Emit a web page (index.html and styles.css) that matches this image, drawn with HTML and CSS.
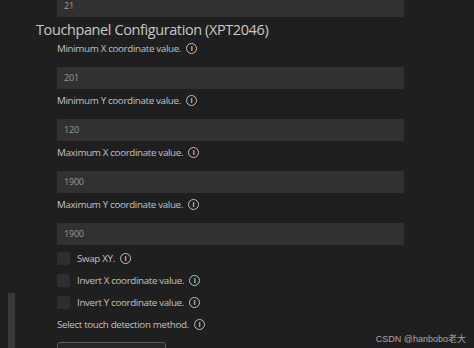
FILE: index.html
```html
<!DOCTYPE html>
<html>
<head>
<meta charset="utf-8">
<link rel="stylesheet" href="styles.css">
</head>
<body>
<div class="page">
  <div class="input first">21</div>
  <h2 class="heading">Touchpanel Configuration (XPT2046)</h2>
  <div class="settings">
    <div class="setting">
      <div class="label">Minimum X coordinate value. <span class="info">i</span></div>
      <div class="input">201</div>
    </div>
    <div class="setting">
      <div class="label">Minimum Y coordinate value. <span class="info">i</span></div>
      <div class="input">120</div>
    </div>
    <div class="setting">
      <div class="label">Maximum X coordinate value. <span class="info">i</span></div>
      <div class="input">1900</div>
    </div>
    <div class="setting">
      <div class="label">Maximum Y coordinate value. <span class="info">i</span></div>
      <div class="input">1900</div>
    </div>
    <div class="checks">
      <div class="check"><span class="box"></span>Swap XY. <span class="info">i</span></div>
      <div class="check"><span class="box"></span>Invert X coordinate value. <span class="info">i</span></div>
      <div class="check"><span class="box"></span>Invert Y coordinate value. <span class="info">i</span></div>
      <div class="check plain">Select touch detection method. <span class="info">i</span></div>
    </div>
    <div class="select"></div>
  </div>
</div>
<div class="scrollbar"></div>
<div class="watermark">CSDN @hanbobo老大</div>
</body>
</html>
```
FILE: styles.css
```css
html, body {
  margin: 0;
  padding: 0;
  background: #1f1f1f;
  height: 100%;
  overflow: hidden;
}
body {
  font-family: "Open Sans", "Noto Sans", sans-serif;
  color: #c0c0c0;
  position: relative;
}
.page {
  padding-left: 36px;
}
.input {
  width: 347px;
  height: 22px;
  box-sizing: border-box;
  background: #313131;
  color: #9a9a9a;
  font-size: 9px;
  letter-spacing: -0.2px;
  line-height: 22px;
  padding-left: 7px;
}
.first {
  margin-top: -5px;
  margin-left: 21px;
}
.heading {
  margin: 3px 0 0 0;
  font-size: 14.5px;
  letter-spacing: -0.4px;
  font-weight: normal;
  line-height: 20px;
  color: #c8c8c8;
}
.settings {
  padding-left: 21px;
}
.setting {
  padding-top: 3px;
}
.setting:first-child {
  padding-top: 0;
}
.label {
  font-size: 9.8px;
  letter-spacing: -0.35px;
  line-height: 17px;
  margin-bottom: 10px;
  display: flex;
  align-items: center;
  white-space: pre;
}
.info {
  display: inline-flex;
  align-items: center;
  justify-content: center;
  width: 9px;
  height: 9px;
  border: 1px solid #c0c0c0;
  border-radius: 50%;
  font-size: 7px;
  line-height: 1;
  letter-spacing: 0;
  margin-left: 3px;
  font-weight: bold;
}
.checks {
  padding-top: 2px;
}
.check {
  height: 22px;
  display: flex;
  align-items: center;
  font-size: 9.8px;
  letter-spacing: -0.35px;
  white-space: pre;
}
.box {
  width: 13px;
  height: 13px;
  background: #2e2e2e;
  border-radius: 2px;
  margin-right: 7px;
}
.select {
  margin-top: 7px;
  width: 109px;
  height: 24px;
  box-sizing: border-box;
  border: 1px solid #5c5c5c;
  border-radius: 3px;
  background: #262626;
}
.scrollbar {
  position: absolute;
  left: 8px;
  top: 293px;
  width: 7px;
  height: 60px;
  background: #383838;
}
.watermark {
  position: absolute;
  right: 8px;
  top: 332px;
  white-space: nowrap;
  font-family: "Liberation Sans", "Noto Sans CJK SC", sans-serif;
  font-size: 9px;
  color: #a8a8a8;
}
```
